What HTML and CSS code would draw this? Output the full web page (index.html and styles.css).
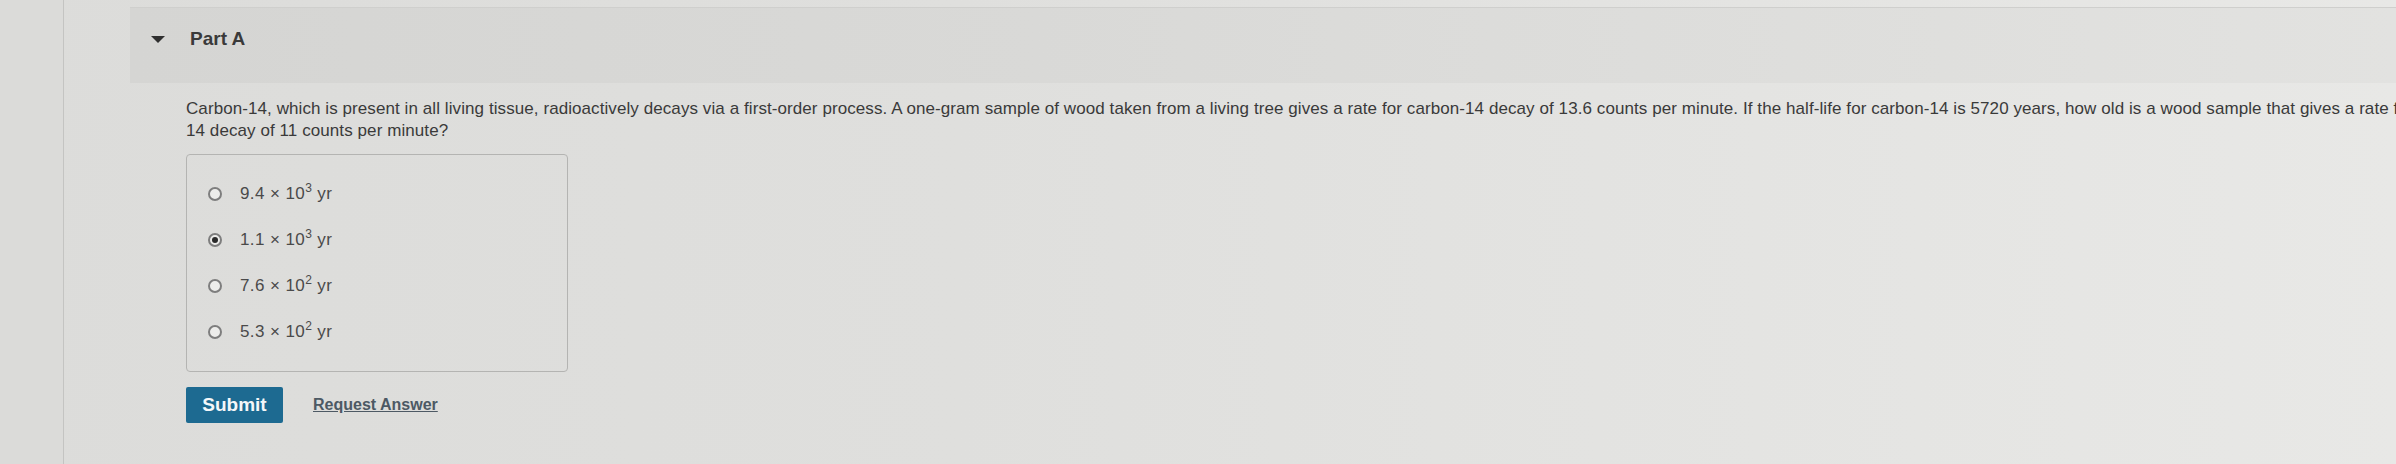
FILE: index.html
```html
<!DOCTYPE html>
<html lang="en">
<head>
<meta charset="utf-8">
<title>Part A</title>
<link rel="stylesheet" href="styles.css">
</head>
<body>
<div class="page">
  <aside class="sidebar"></aside>
  <main class="main">
    <div class="part-header">
      <span class="caret"></span>
      <span class="part-title">Part A</span>
    </div>
    <div class="content">
      <p class="question">Carbon-14, which is present in all living tissue, radioactively decays via a first-order process. A one-gram sample of wood taken from a living tree gives a rate for carbon-14 decay of 13.6 counts per minute. If the half-life for carbon-14 is 5720 years, how old is a wood sample that gives a rate for carbon-<br>14 decay of 11 counts per minute?</p>
      <div class="choices">
        <label class="option"><span class="radio"></span><span class="opt-text">9.4 × 10<sup>3</sup> yr</span></label>
        <label class="option"><span class="radio checked"></span><span class="opt-text">1.1 × 10<sup>3</sup> yr</span></label>
        <label class="option"><span class="radio"></span><span class="opt-text">7.6 × 10<sup>2</sup> yr</span></label>
        <label class="option"><span class="radio"></span><span class="opt-text">5.3 × 10<sup>2</sup> yr</span></label>
      </div>
      <div class="actions">
        <button class="submit">Submit</button>
        <a class="request" href="#">Request Answer</a>
      </div>
    </div>
  </main>
</div>
</body>
</html>
```
FILE: styles.css
```css
html, body {
  margin: 0;
  padding: 0;
  height: 100%;
  overflow: hidden;
}
body {
  background: linear-gradient(90deg, #dcdcda 0%, #dfdfdd 40%, #e5e5e3 80%, #e8e8e6 100%);
  font-family: "Liberation Sans", Arial, sans-serif;
  color: #383838;
}
.page {
  display: flex;
  height: 464px;
}
.sidebar {
  width: 63px;
  flex: none;
  border-right: 1px solid #c4c4c2;
  background: #dbdbd9;
}
.main {
  flex: 1;
  min-width: 0;
  padding-left: 66px;
  padding-top: 7px;
  overflow: hidden;
}
.part-header {
  height: 76px;
  box-sizing: border-box;
  border-top: 1px solid #cfcfcd;
  background: linear-gradient(90deg, #d5d5d3 0%, #d9d9d7 40%, #dfdfdd 80%, #e2e2e0 100%);
  display: flex;
  align-items: flex-start;
  padding-left: 21px;
  padding-top: 19px;
}
.caret {
  width: 0;
  height: 0;
  border-left: 7px solid transparent;
  border-right: 7px solid transparent;
  border-top: 7px solid #2f2f2f;
  margin-top: 9px;
  margin-right: 25px;
}
.part-title {
  font-size: 19px;
  line-height: 24px;
  font-weight: bold;
  color: #3a3a3a;
}
.content {
  padding-left: 56px;
  padding-top: 15px;
}
.question {
  margin: 0;
  font-size: 17px;
  line-height: 22px;
  letter-spacing: 0.08px;
  white-space: nowrap;
  color: #3a3a3a;
}
.choices {
  margin-top: 12px;
  width: 382px;
  box-sizing: border-box;
  border: 1px solid #b4b4b2;
  border-radius: 4px;
  padding: 16px 0 16px 21px;
}
.option {
  display: flex;
  align-items: center;
  height: 46px;
}
.radio {
  width: 14px;
  height: 14px;
  box-sizing: border-box;
  border: 2px solid #7e7e7e;
  border-radius: 50%;
  background: #ededeb;
  margin-right: 18px;
  display: flex;
  align-items: center;
  justify-content: center;
}
.radio.checked::after {
  content: "";
  width: 6px;
  height: 6px;
  border-radius: 50%;
  background: #2a2a2a;
}
.opt-text {
  font-size: 17px;
  letter-spacing: 0.4px;
  color: #4a4a4a;
}
.opt-text sup {
  font-size: 12px;
  line-height: 0;
  vertical-align: 7px;
}
.actions {
  margin-top: 15px;
  display: flex;
  align-items: center;
  gap: 30px;
}
.submit {
  width: 97px;
  height: 36px;
  border: none;
  border-radius: 2px;
  background: #1d6a91;
  color: #f4f7f9;
  font-family: "Liberation Sans", Arial, sans-serif;
  font-size: 19px;
  font-weight: bold;
  padding: 0;
}
.request {
  font-size: 16px;
  font-weight: bold;
  color: #4d5964;
  text-decoration: underline;
}
```
